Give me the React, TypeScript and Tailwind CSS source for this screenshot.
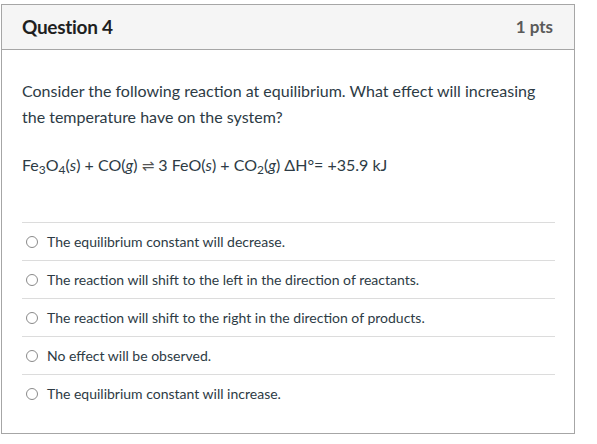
import React from "react";

const answers = [
  "The equilibrium constant will decrease.",
  "The reaction will shift to the left in the direction of reactants.",
  "The reaction will shift to the right in the direction of products.",
  "No effect will be observed.",
  "The equilibrium constant will increase.",
];

export default function App() {
  return (
    <div className="w-[597px] h-[444px] bg-white pt-[4px] pl-[1px]" style={{ fontFamily: "Lato, 'Noto Sans', sans-serif" }}>
      <div className="w-[574px] h-[430px] border border-[#a6a6a6] flex flex-col">
        <div className="h-[45px] bg-[#f5f5f5] border-b border-[#a6a6a6] flex items-center justify-between pl-[20px] pr-[21px]">
          <span className="text-[19px] font-bold text-[#1f1f1f] tracking-[-0.3px]">Question 4</span>
          <span className="text-[17px] font-bold text-[#5a5a5a]">1 pts</span>
        </div>
        <div className="px-[20px] pt-[28px] text-[#2d3b45]">
          <p className="text-[16px] leading-[26px]">
            Consider the following reaction at equilibrium. What effect will increasing the temperature have on the system?
          </p>
          <p className="text-[16px] leading-[26px] mt-[22px]">
            Fe<span className="text-[12px] relative top-[3px]">3</span>O<span className="text-[12px] relative top-[3px]">4</span>(<i>s</i>) + CO(<i>g</i>){" "}
            <span className="text-[#555] text-[15px]" style={{ fontFamily: "'DejaVu Sans', sans-serif" }}>⇌</span> 3 FeO(<i>s</i>) + CO<span className="text-[12px] relative top-[3px]">2</span>(<i>g</i>) ΔH°= +35.9 kJ
          </p>
          <div className="mt-[42px] mr-[-1px]">
            {answers.map((a, i) => (
              <div key={i} className="h-[38px] border-t border-[#dcdcdc] flex items-center pl-[4px]">
                <span className="w-[12px] h-[12px] rounded-full border border-[#8a8a8a] bg-white shrink-0" />
                <span className="ml-[9px] text-[14px] text-[#2d3b45]">{a}</span>
              </div>
            ))}
          </div>
        </div>
      </div>
    </div>
  );
}
